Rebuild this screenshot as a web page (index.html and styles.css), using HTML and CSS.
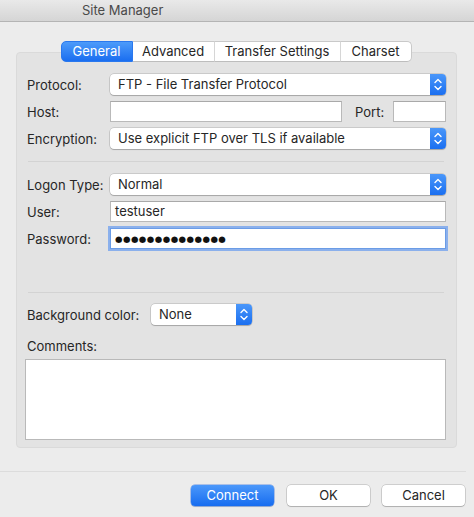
FILE: index.html
```html
<!DOCTYPE html>
<html>
<head>
<meta charset="utf-8">
<title>Site Manager</title>
<link rel="stylesheet" href="styles.css">
</head>
<body>
<div class="window">
  <div class="titlebar"><span class="title">Site Manager</span></div>
  <div class="main">
    <div class="tabs">
      <div class="tab active t-general">General</div>
      <div class="tab t-advanced">Advanced</div>
      <div class="tab t-transfer">Transfer Settings</div>
      <div class="tab t-charset">Charset</div>
    </div>
    <div class="group">
      <div class="row">
        <span class="lbl">Protocol:</span>
        <div class="select grow"><span class="val">FTP - File Transfer Protocol</span><span class="arrow"><svg width="16" height="21" viewBox="0 0 16 21"><path d="M5 8.5 L8 5.5 L11 8.5 M5 12.5 L8 15.5 L11 12.5" fill="none" stroke="#fff" stroke-width="1.4" stroke-linecap="round" stroke-linejoin="round"/></svg></span></div>
      </div>
      <div class="row">
        <span class="lbl">Host:</span>
        <div class="input host"></div>
        <span class="port-lbl">Port:</span>
        <div class="input port"></div>
      </div>
      <div class="row">
        <span class="lbl">Encryption:</span>
        <div class="select grow"><span class="val">Use explicit FTP over TLS if available</span><span class="arrow"><svg width="16" height="21" viewBox="0 0 16 21"><path d="M5 8.5 L8 5.5 L11 8.5 M5 12.5 L8 15.5 L11 12.5" fill="none" stroke="#fff" stroke-width="1.4" stroke-linecap="round" stroke-linejoin="round"/></svg></span></div>
      </div>
      <div class="sep sep1"></div>
      <div class="row">
        <span class="lbl">Logon Type:</span>
        <div class="select grow"><span class="val">Normal</span><span class="arrow"><svg width="16" height="21" viewBox="0 0 16 21"><path d="M5 8.5 L8 5.5 L11 8.5 M5 12.5 L8 15.5 L11 12.5" fill="none" stroke="#fff" stroke-width="1.4" stroke-linecap="round" stroke-linejoin="round"/></svg></span></div>
      </div>
      <div class="row">
        <span class="lbl">User:</span>
        <div class="input grow"><span class="txt">testuser</span></div>
      </div>
      <div class="row">
        <span class="lbl">Password:</span>
        <div class="input grow focused"><span class="dots">●●●●●●●●●●●●●●</span></div>
      </div>
      <div class="sep sep2"></div>
      <div class="row">
        <span class="lbl bg-lbl">Background color:</span>
        <div class="select small"><span class="val">None</span><span class="arrow"><svg width="16" height="21" viewBox="0 0 16 21"><path d="M5 8.5 L8 5.5 L11 8.5 M5 12.5 L8 15.5 L11 12.5" fill="none" stroke="#fff" stroke-width="1.4" stroke-linecap="round" stroke-linejoin="round"/></svg></span></div>
      </div>
      <div class="comments-lbl">Comments:</div>
      <div class="textarea"></div>
    </div>
  </div>
  <div class="footer-sep"></div>
  <div class="buttons">
    <div class="btn primary">Connect</div>
    <div class="btn ok">OK</div>
    <div class="btn">Cancel</div>
  </div>
</div>
</body>
</html>
```

FILE: styles.css
```css
* { box-sizing: border-box; }
html, body { margin: 0; padding: 0; }
body {
  background: #ececec;
  font-family: Inter, "Liberation Sans", sans-serif;
  font-size: 13px;
  color: #262626;
}
.window {
  width: 474px;
  height: 517px;
  overflow: hidden;
  background: #ececec;
}
.titlebar {
  height: 22px;
  background: linear-gradient(#e9e9e9, #d5d5d5);
  border-bottom: 1px solid #b4b4b4;
  padding-left: 82px;
  line-height: 21px;
}
.title { color: #4a4a4a; font-size: 13px; }
.main {
  padding: 0 17px 0 16px;
}
.tabs {
  position: relative;
  z-index: 1;
  margin-top: 19px;
  display: flex;
  justify-content: center;
  padding-right: 1px;
}
.tab {
  height: 21px;
  line-height: 19px;
  text-align: center;
  background: #fff;
  border-top: 1px solid #c9c9c9;
  border-bottom: 1px solid #bdbdbd;
  border-right: 1px solid #d6d6d6;
  color: #262626;
}
.tab:first-child { border-left: 1px solid #c9c9c9; border-radius: 5px 0 0 5px; }
.tab:last-child { border-right: 1px solid #c9c9c9; border-radius: 0 5px 5px 0; }
.tab.active {
  background: linear-gradient(#4d9bfa, #1a6ef0);
  color: #fff;
  border-color: #2a78ee;
}
.t-general { width: 72px; }
.t-advanced { width: 82px; }
.t-transfer { width: 126px; }
.t-charset { width: 71px; }
.group {
  margin-top: -10px;
  background: #e3e3e3;
  border: 1px solid #dadada;
  border-radius: 4px;
  padding: 21px 10px 7px 10px;
}
.row {
  display: flex;
  align-items: center;
  height: 21px;
  margin-bottom: 6px;
}
.lbl { width: 83px; flex: none; }
.bg-lbl { width: 124px; }
.grow { flex: 1; }
.select {
  height: 21px;
  display: flex;
  background: #fff;
  border-radius: 4px;
  box-shadow: 0 0 0 0.5px rgba(0,0,0,0.22), 0 1px 1px rgba(0,0,0,0.18);
  overflow: hidden;
}
.select .val { flex: 1; padding-left: 8px; line-height: 21px; white-space: nowrap; }
.select .arrow {
  width: 16px;
  flex: none;
  background: linear-gradient(#4a97fa, #1b6ff0);
}
.select .arrow svg { display: block; }
.select.small { width: 101px; }
.input {
  height: 21px;
  background: #fff;
  border: 1px solid #b9b9b9;
  border-top-color: #a9a9a9;
}
.host { width: 232px; }
.port-lbl { margin-left: 13px; width: 38px; }
.port { width: 53px; }
.txt { padding-left: 4px; line-height: 19px; }
.focused {
  border-color: #6b9ce6;
  box-shadow: 0 0 0 2px #8bb0ec;
}
.dots {
  padding-left: 4px;
  font-family: "DejaVu Sans", sans-serif;
  font-size: 8.6px;
  letter-spacing: 0.45px;
  line-height: 19px;
  color: #111;
}
.sep {
  height: 1px;
  background: #d3d3d3;
  margin: 0 2px 0 1px;
}
.sep1 { margin-top: 12px; margin-bottom: 12px; }
.sep2 { margin-top: 43px; margin-bottom: 11px; }
.comments-lbl {
  margin-top: 13px;
  line-height: 16px;
  height: 16px;
}
.textarea {
  margin-top: 5px;
  margin-left: -2px;
  height: 81px;
  background: #fff;
  border: 1px solid #b9b9b9;
}
.footer-sep {
  margin-top: 23px;
  height: 1px;
  background: #dcdcdc;
  margin-right: 8px;
}
.buttons {
  display: flex;
  justify-content: flex-end;
  padding-right: 9px;
  margin-top: 13px;
}
.btn {
  width: 83px;
  height: 21px;
  line-height: 21px;
  text-align: center;
  background: #fff;
  border-radius: 4px;
  box-shadow: 0 0 0 0.5px rgba(0,0,0,0.25), 0 1px 1px rgba(0,0,0,0.15);
  margin-left: 12px;
  color: #262626;
}
.btn.ok { margin-left: 13px; }
.btn.primary {
  background: linear-gradient(#4b98fa, #176cf0);
  color: #fff;
  box-shadow: 0 0 0 0.5px rgba(20,90,220,0.6), 0 1px 1px rgba(0,0,0,0.15);
}
```
